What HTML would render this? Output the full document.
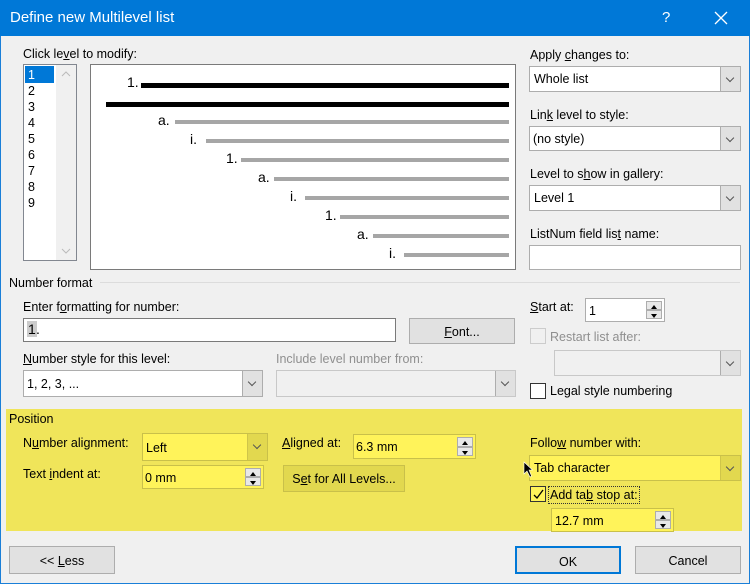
<!DOCTYPE html>
<html><head><meta charset="utf-8"><style>
*{box-sizing:border-box;margin:0;padding:0}
body{width:750px;height:584px;overflow:hidden;background:#f0f0f0;font-family:"Liberation Sans",sans-serif;font-size:12.5px;color:#000;position:relative}
.a{position:absolute;white-space:nowrap}
#win{position:absolute;left:0;top:0;width:750px;height:584px;border:1px solid #1a7fd8;border-top:none}
#tb{position:absolute;left:0;top:0;width:750px;height:36px;background:#0078d7;color:#fff}
.box{position:absolute;background:#fff;border:1px solid #7a7a7a}
.dd{position:absolute;right:0;top:0;bottom:0;width:20px;background:#e1e1e1;border-left:1px solid #adadad}
.dd:after{content:"";position:absolute;left:6px;top:8px;width:5px;height:5px;border-right:1px solid #555;border-bottom:1px solid #555;transform:rotate(45deg)}
.sp{position:absolute;right:2px;top:2px;bottom:2px;width:16px}
.sp i{display:block;height:50%;border:1px solid #adadad;background:#e8e8e8;position:relative}
.sp i.u:after{content:"";position:absolute;left:4px;top:3px;border:3.5px solid transparent;border-bottom:4px solid #000;border-top:0}
.sp i.d:after{content:"";position:absolute;left:4px;top:3px;border:3.5px solid transparent;border-top:4px solid #000;border-bottom:0}
.btn{position:absolute;background:#e1e1e1;border:1px solid #adadad;text-align:center}
.ln{position:absolute;height:4px;background:#a6a6a6}
.bk{position:absolute;height:5px;background:#000}
.pl{position:absolute;font-size:14px;font-family:"Liberation Sans",sans-serif}
.y{background:#fff35a}
.ydd{background:#e2d84f;border-left:1px solid #cfc54a}
u{text-decoration:underline}
.cb{position:absolute;width:16px;height:16px;border:1px solid #333;background:#fff}
</style></head><body>
<div id="win"></div>
<div id="tb"><div class="a" style="left:10px;top:9px;font-size:15px">Define new Multilevel list</div>
<div class="a" style="left:662px;top:9px;font-size:15px">?</div>
<svg class="a" style="left:714px;top:11px" width="14" height="14"><path d="M1 1L13 13M13 1L1 13" stroke="#fff" stroke-width="1.3"/></svg></div>

<div class="a" style="left:23px;top:47px">Click le<u>v</u>el to modify:</div>
<div class="box" style="left:23px;top:64px;width:54px;height:197px;border-color:#828790">
<div style="position:absolute;left:32px;top:0;width:20px;height:195px;background:#f0f0f0"></div>
<div style="position:absolute;left:1px;top:1px;width:29px;height:17px;background:#0078d7"></div>
<div style="position:absolute;left:4px;top:2px;line-height:16px;font-size:12.5px"><span style="color:#fff">1</span><br>2<br>3<br>4<br>5<br>6<br>7<br>8<br>9</div>
<svg class="a" style="left:37px;top:6px" width="10" height="6"><path d="M1 5L5 1L9 5" fill="none" stroke="#bbb"/></svg>
<svg class="a" style="left:37px;top:183px" width="10" height="6"><path d="M1 1L5 5L9 1" fill="none" stroke="#bbb"/></svg>
</div>
<div class="box" style="left:90px;top:64px;width:426px;height:206px">
<div class="pl" style="left:36px;top:9px">1.</div><div class="bk" style="left:50px;top:18px;width:368px"></div>
<div class="bk" style="left:15px;top:37px;width:403px"></div>
<div class="pl" style="left:67px;top:47px">a.</div><div class="ln" style="left:84px;top:55px;width:334px"></div>
<div class="pl" style="left:99px;top:66px">i.</div><div class="ln" style="left:115px;top:74px;width:303px"></div>
<div class="pl" style="left:135px;top:85px">1.</div><div class="ln" style="left:150px;top:93px;width:268px"></div>
<div class="pl" style="left:167px;top:104px">a.</div><div class="ln" style="left:183px;top:112px;width:235px"></div>
<div class="pl" style="left:199px;top:123px">i.</div><div class="ln" style="left:214px;top:131px;width:204px"></div>
<div class="pl" style="left:234px;top:142px">1.</div><div class="ln" style="left:249px;top:150px;width:169px"></div>
<div class="pl" style="left:266px;top:161px">a.</div><div class="ln" style="left:282px;top:169px;width:136px"></div>
<div class="pl" style="left:298px;top:180px">i.</div><div class="ln" style="left:313px;top:188px;width:105px"></div>
</div>

<div class="a" style="left:530px;top:48px">Apply <u>c</u>hanges to:</div>
<div class="box" style="left:529px;top:66px;width:212px;height:26px;border-color:#adadad"><div class="a" style="left:4px;top:5px">Whole list</div><div class="dd"></div></div>
<div class="a" style="left:530px;top:108px">Lin<u>k</u> level to style:</div>
<div class="box" style="left:529px;top:126px;width:212px;height:25px;border-color:#adadad"><div class="a" style="left:3px;top:5px">(no style)</div><div class="dd"></div></div>
<div class="a" style="left:530px;top:167px">Level to s<u>h</u>ow in gallery:</div>
<div class="box" style="left:529px;top:185px;width:212px;height:26px;border-color:#adadad"><div class="a" style="left:4px;top:5px">Level 1</div><div class="dd"></div></div>
<div class="a" style="left:530px;top:227px">ListNum field lis<u>t</u> name:</div>
<div class="box" style="left:529px;top:245px;width:212px;height:25px;border-color:#adadad"></div>

<div class="a" style="left:9px;top:276px">Number format</div>
<div class="a" style="left:100px;top:282px;width:640px;height:1px;background:#dcdcdc"></div>
<div class="a" style="left:23px;top:300px">Enter f<u>o</u>rmatting for number:</div>
<div class="box" style="left:23px;top:318px;width:373px;height:24px"><div class="a" style="left:3px;top:2px;font-size:14px;background:#ccc;padding:0 1px">1</div><div class="a" style="left:12px;top:2px;font-size:14px">.</div></div>
<div class="btn" style="left:409px;top:318px;width:106px;height:26px;padding-top:6px"><u>F</u>ont...</div>
<div class="a" style="left:23px;top:352px"><u>N</u>umber style for this level:</div>
<div class="box" style="left:23px;top:370px;width:240px;height:27px;border-color:#adadad"><div class="a" style="left:3px;top:6px">1, 2, 3, ...</div><div class="dd"></div></div>
<div class="a" style="left:276px;top:352px;color:#8f8f8f">Include level number from:</div>
<div class="box" style="left:276px;top:370px;width:240px;height:27px;border-color:#c8c8c8;background:#f0f0f0"><div class="dd"></div></div>

<div class="a" style="left:530px;top:300px"><u>S</u>tart at:</div>
<div class="box" style="left:585px;top:298px;width:80px;height:24px;border-color:#adadad"><div class="a" style="left:3px;top:5px">1</div><div class="sp"><i class="u"></i><i class="d"></i></div></div>
<div class="cb" style="left:530px;top:328px;border-color:#ccc;background:#f0f0f0"></div>
<div class="a" style="left:550px;top:330px;color:#8f8f8f">Restart list after:</div>
<div class="box" style="left:554px;top:350px;width:187px;height:26px;border-color:#c8c8c8;background:#f0f0f0"><div class="dd"></div></div>
<div class="cb" style="left:530px;top:383px"></div>
<div class="a" style="left:550px;top:384px">Le<u>g</u>al style numbering</div>

<div class="a" style="left:6px;top:409px;width:736px;height:122px;background:#f0e55a"></div>
<div class="a" style="left:9px;top:412px">Position</div>
<div class="a" style="left:23px;top:436px">N<u>u</u>mber alignment:</div>
<div class="box y" style="left:142px;top:433px;width:126px;height:28px;border-color:#c9c04a"><div class="a" style="left:3px;top:7px">Left</div><div class="dd ydd"></div></div>
<div class="a" style="left:23px;top:467px">Text <u>i</u>ndent at:</div>
<div class="box y" style="left:142px;top:465px;width:122px;height:24px;border-color:#c9c04a"><div class="a" style="left:2px;top:5px">0 mm</div><div class="sp"><i class="u y"></i><i class="d y"></i></div></div>
<div class="a" style="left:282px;top:436px"><u>A</u>ligned at:</div>
<div class="box y" style="left:353px;top:434px;width:123px;height:25px;border-color:#c9c04a"><div class="a" style="left:2px;top:5px">6.3 mm</div><div class="sp"><i class="u y"></i><i class="d y"></i></div></div>
<div class="btn" style="left:283px;top:465px;width:122px;height:27px;padding-top:6px;background:#e2d84f;border-color:#c9c04a">S<u>e</u>t for All Levels...</div>
<div class="a" style="left:530px;top:436px">Follo<u>w</u> number with:</div>
<div class="box y" style="left:529px;top:455px;width:212px;height:26px;border-color:#c9c04a"><div class="a" style="left:4px;top:5px">Tab character</div><div class="dd ydd"></div></div>
<svg class="a" style="left:523px;top:461px" width="10" height="17"><path d="M1 1L1 13L4 10L7 16L8.5 15L6 9L9.5 9Z" fill="#000" stroke="#fff" stroke-width="0.6"/></svg>
<div class="cb" style="left:530px;top:486px;background:#fff35a"><svg class="a" style="left:1px;top:1px" width="13" height="13"><path d="M2 7L5 10L11 2" fill="none" stroke="#000" stroke-width="1.3"/></svg></div>
<div class="a" style="left:548px;top:486px;border:1px dotted #333;padding:1px 1px;line-height:14px">Add ta<u>b</u> stop at:</div>
<div class="box y" style="left:551px;top:508px;width:123px;height:24px;border-color:#c9c04a"><div class="a" style="left:3px;top:5px">12.7 mm</div><div class="sp"><i class="u y"></i><i class="d y"></i></div></div>

<div class="btn" style="left:9px;top:546px;width:106px;height:28px;padding-top:7px">&lt;&lt; <u>L</u>ess</div>
<div class="btn" style="left:515px;top:546px;width:106px;height:28px;padding-top:7px;border:2px solid #0078d7">OK</div>
<div class="btn" style="left:635px;top:546px;width:106px;height:28px;padding-top:7px">Cancel</div>
</body></html>
